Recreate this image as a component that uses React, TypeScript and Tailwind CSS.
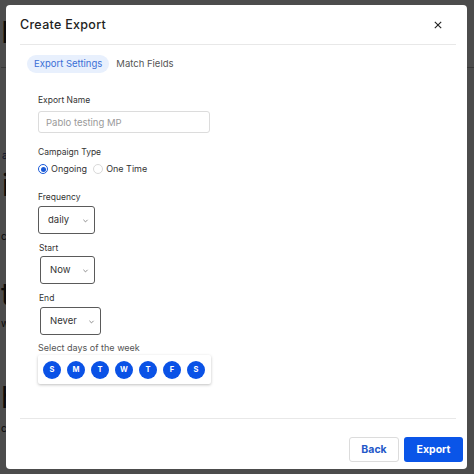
import React, { useState } from "react";

const days = ["S", "M", "T", "W", "T", "F", "S"];

function Select({ value, width, ml }: { value: string; width: string; ml: string }) {
  return (
    <div
      className={`flex items-center justify-between h-[28px] border-[1.5px] border-[#5a5a5a] rounded-[3px] pl-[9px] pr-[5px] text-[9.5px] text-[#333] ${width} ${ml}`}
    >
      <span>{value}</span>
      <svg width="7" height="7" viewBox="0 0 10 10" className="text-[#777]">
        <path d="M2 4 L5 7 L8 4" fill="none" stroke="currentColor" strokeWidth="1.2" />
      </svg>
    </div>
  );
}

function Radio({ checked, label, onClick }: { checked: boolean; label: string; onClick: () => void }) {
  return (
    <button className="flex items-center gap-[3px]" onClick={onClick}>
      <span
        className={`w-[10px] h-[10px] rounded-full flex items-center justify-center ${
          checked ? "border-[1.5px] border-[#1a5ad8]" : "border border-[#d9d9d9]"
        }`}
      >
        {checked && <span className="w-[5px] h-[5px] rounded-full bg-[#1a5ad8]" />}
      </span>
      {label}
    </button>
  );
}

export default function App() {
  const [ongoing, setOngoing] = useState(true);

  return (
    <div className="relative w-[474px] h-[474px] overflow-hidden bg-white font-['Inter',sans-serif]">
      {/* page behind the overlay */}
      <div className="flex flex-col pl-[1px] text-[#222]">
        <div className="h-[12px]" />
        <span className="text-[30px] leading-[40px]">P</span>
        <div className="h-[16px] border-b border-[#bbb]" />
        <span className="text-[10px] text-[#1e3a8a] mt-[80px] ml-[1px]">ac</span>
        <span className="text-[30px] leading-[40px] mt-[2px] ml-[1px]">i</span>
        <span className="text-[10px] mt-[24px]">ci</span>
        <span className="text-[30px] leading-[40px] mt-[30px]">t</span>
        <span className="text-[10px] mt-[2px]">w</span>
        <span className="text-[30px] leading-[40px] mt-[46px]">h</span>
        <span className="text-[10px] mt-[4px]">c</span>
      </div>
      <div className="absolute inset-0 bg-black/70" />

      {/* modal */}
      <div className="absolute left-[6px] top-[5px] w-[461px] h-[464px] bg-white rounded-[4px] flex flex-col">
        <div className="flex items-center justify-between pl-[14px] pr-[25px] h-[39px] pt-[1px]">
          <h2 className="text-[12.5px] font-medium tracking-[0.3px] text-[#222]">Create Export</h2>
          <svg width="8" height="8" viewBox="0 0 10 10">
            <path d="M1 1 L9 9 M9 1 L1 9" stroke="#222" strokeWidth="1.4" />
          </svg>
        </div>
        <div className="ml-[14px] mr-[11px] h-px bg-[#e8e8e8]" />

        <div className="flex items-center pl-[21px] mt-[10px]">
          <div className="h-[18px] px-[7px] rounded-full bg-[#e8f0fd] text-[9.5px] text-[#3a6fd6] flex items-center">
            Export Settings
          </div>
          <div className="h-[18px] px-[7px] text-[9.5px] text-[#555] flex items-center">Match Fields</div>
        </div>

        <div className="flex flex-col pl-[32px] mt-[21px] text-[#333]">
          <label className="text-[8.5px] leading-[12px]">Export Name</label>
          <input
            className="mt-[5px] w-[172px] h-[22px] border border-[#dcdcdc] rounded-[3px] px-[7px] text-[9.5px] text-[#333] placeholder:text-[#9a9a9a] outline-none"
            placeholder="Pablo testing MP"
          />

          <label className="text-[8.5px] leading-[12px] mt-[13px]">Campaign Type</label>
          <div className="flex items-center h-[12px] mt-[5px] text-[9px] leading-[12px]">
            <Radio checked={ongoing} label="Ongoing" onClick={() => setOngoing(true)} />
            <div className="w-[6px]" />
            <Radio checked={!ongoing} label="One Time" onClick={() => setOngoing(false)} />
          </div>

          <label className="text-[8.5px] leading-[12px] mt-[16px]">Frequency</label>
          <div className="mt-[3px]">
            <Select value="daily" width="w-[57px]" ml="ml-0" />
          </div>

          <label className="text-[8.5px] leading-[12px] mt-[8px] ml-[1px]">Start</label>
          <div className="mt-[2px]">
            <Select value="Now" width="w-[55px]" ml="ml-[2px]" />
          </div>

          <label className="text-[8.5px] leading-[12px] mt-[8px] ml-[1px]">End</label>
          <div className="mt-[3px]">
            <Select value="Never" width="w-[61px]" ml="ml-[2px]" />
          </div>

          <label className="text-[9px] leading-[12px] text-[#555] mt-[7px]">Select days of the week</label>
          <div className="mt-[1px] w-[173px] h-[29px] flex items-center gap-[6px] pl-[5px] bg-white shadow-[0_1px_3px_rgba(0,0,0,0.25)] rounded-[2px]">
            {days.map((d, i) => (
              <span
                key={i}
                className="w-[18px] h-[18px] rounded-full bg-[#0a52e6] text-white text-[7.5px] font-bold flex items-center justify-center"
              >
                {d}
              </span>
            ))}
          </div>
        </div>

        <div className="ml-[14px] mr-[11px] h-px bg-[#e8e8e8] mt-auto mb-[18px]" />
        <div className="flex justify-end gap-[5px] pr-[4px] mb-[7px]">
          <button className="w-[50px] h-[25px] border border-[#dcdcdc] rounded-[3px] text-[10.5px] font-bold text-[#2458c8]">
            Back
          </button>
          <button className="w-[59px] h-[25px] rounded-[3px] bg-[#0a55e8] text-[10.5px] font-bold text-white">
            Export
          </button>
        </div>
      </div>
    </div>
  );
}
